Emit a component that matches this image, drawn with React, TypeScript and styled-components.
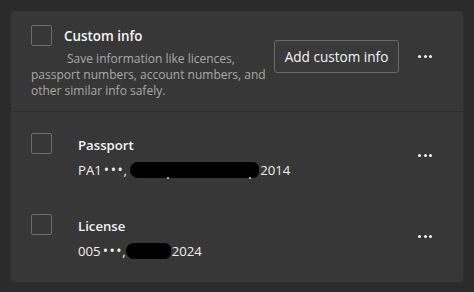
import React from "react";
import styled, { createGlobalStyle } from "styled-components";

const Global = createGlobalStyle`
  html, body { margin: 0; padding: 0; background: #2b2b2b; }
  body { font-family: "Open Sans", "Noto Sans", sans-serif; color: #f2f2f2; }
`;

const Page = styled.div`
  width: 474px;
  height: 292px;
  padding: 11px;
  box-sizing: border-box;
`;

const Card = styled.div`
  width: 452px;
  height: 271px;
  background: #373737;
  border-radius: 4px;
  box-shadow: 1px 1px 0 #303030;
  overflow: hidden;
  display: flex;
  flex-direction: column;
`;

const Header = styled.div`
  display: flex;
  align-items: flex-start;
  padding: 13px 31px 0 20px;
  height: 101px;
  box-sizing: border-box;
  border-bottom: 1px solid #2e2e2e;
`;

const HeaderText = styled.div`
  flex: 1;
`;

const TitleRow = styled.div`
  display: flex;
  align-items: center;
  gap: 12px;
`;

const Box = styled.span`
  display: block;
  width: 19px;
  height: 19px;
  border: 1px solid #6e6e6e;
  border-radius: 2px;
  flex-shrink: 0;
`;

const Title = styled.span`
  font-size: 13.4px;
  font-weight: 600;
  color: #f4f4f4;
  line-height: 21px;
  margin-top: 2px;
`;

const Desc = styled.p`
  margin: 4px 0 0;
  font-size: 12px;
  line-height: 16px;
  color: #a9a9a9;
  text-indent: 36px;
  width: 240px;
`;

const Actions = styled.div`
  display: flex;
  align-items: center;
  gap: 19px;
  margin-top: 16px;
`;

const Button = styled.button`
  height: 33px;
  width: 125px;
  padding: 0;
  border: 1px solid #6a6a6a;
  border-radius: 3px;
  background: #3a3a3a;
  color: #f4f4f4;
  font-family: inherit;
  font-size: 13.6px;
`;

const Dots = styled.span`
  display: flex;
  gap: 2.5px;
  width: 14px;
  & > i {
    display: block;
    width: 3px;
    height: 3px;
    border-radius: 50%;
    background: #efefef;
  }
`;

const Row = styled.div`
  display: flex;
  align-items: flex-start;
  height: 81px;
  padding: 21px 31px 0 20px;
  box-sizing: border-box;
`;

const RowText = styled.div`
  flex: 1;
  margin-left: 26px;
  margin-top: 2px;
`;

const RowTitle = styled.div`
  font-size: 13.2px;
  font-weight: 600;
  line-height: 20px;
  color: #f4f4f4;
`;

const Value = styled.div`
  margin-top: 5px;
  font-size: 13.2px;
  line-height: 20px;
  color: #f0f0f0;
  display: flex;
  align-items: center;
`;

const Mask = styled.span`
  font-size: 14px;
  letter-spacing: 1.6px;
  margin-left: 2px;
  margin-right: -1px;
`;

const Redact = styled.span<{ $w: number }>`
  position: relative;
  display: inline-block;
  width: ${(p) => p.$w}px;
  height: 16px;
  background: #000;
  border-radius: 9px 7px 7px 9px;
  margin-right: 1px;
`;

const Speck = styled.i<{ $x: number }>`
  position: absolute;
  left: ${(p) => p.$x}px;
  bottom: -1px;
  width: 2px;
  height: 2px;
  background: #d8d8d8;
  border-radius: 50%;
`;

const RowDots = styled.div`
  margin-top: 21px;
`;

const More = () => (
  <Dots>
    <i />
    <i />
    <i />
  </Dots>
);

export default function App() {
  return (
    <Page>
      <Global />
      <Card>
        <Header>
          <HeaderText>
            <TitleRow>
              <Box />
              <Title>Custom info</Title>
            </TitleRow>
            <Desc>
              Save information like licences, passport numbers, account numbers, and other similar info safely.
            </Desc>
          </HeaderText>
          <Actions>
            <Button>Add custom info</Button>
            <More />
          </Actions>
        </Header>
        <Row>
          <Box />
          <RowText>
            <RowTitle>Passport</RowTitle>
            <Value>
              PA1<Mask>•••</Mask>,&nbsp;
              <Redact $w={129}>
                <Speck $x={37} />
                <Speck $x={119} />
              </Redact>
              2014
            </Value>
          </RowText>
          <RowDots>
            <More />
          </RowDots>
        </Row>
        <Row>
          <Box />
          <RowText>
            <RowTitle>License</RowTitle>
            <Value>
              005<Mask>•••</Mask>,<Redact $w={45} />2024
            </Value>
          </RowText>
          <RowDots>
            <More />
          </RowDots>
        </Row>
      </Card>
    </Page>
  );
}
